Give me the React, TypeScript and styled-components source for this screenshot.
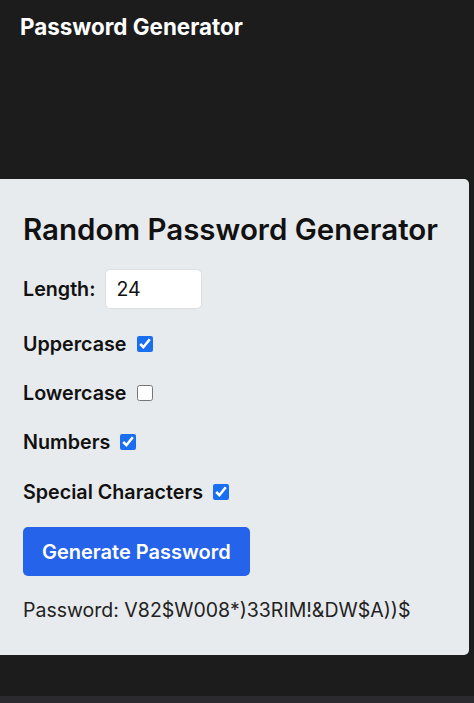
import React, { useState } from 'react';
import styled, { createGlobalStyle } from 'styled-components';

const GlobalStyle = createGlobalStyle`
  html, body {
    margin: 0;
    padding: 0;
    background-color: #1c1c1d;
    font-family: Inter, "Noto Sans", sans-serif;
  }
`;

const CHARS = {
  upper: 'ABCDEFGHIJKLMNOPQRSTUVWXYZ',
  lower: 'abcdefghijklmnopqrstuvwxyz',
  numbers: '0123456789',
  special: '!@#$%^&*()',
};

const App = () => {
  const [length, setLength] = useState('24');
  const [options, setOptions] = useState({
    upper: true,
    lower: false,
    numbers: true,
    special: true,
  });
  const [password, setPassword] = useState('V82$W008*)33RIM!&DW$A))$');

  const toggle = (key: keyof typeof options) =>
    setOptions({ ...options, [key]: !options[key] });

  const generate = () => {
    let pool = '';
    (Object.keys(options) as (keyof typeof options)[]).forEach((k) => {
      if (options[k]) pool += CHARS[k];
    });
    if (!pool) return;
    let out = '';
    for (let i = 0; i < Number(length); i++) {
      out += pool[Math.floor(Math.random() * pool.length)];
    }
    setPassword(out);
  };

  return (
    <Page>
      <GlobalStyle />
      <Header>Password Generator</Header>
      <Card>
        <Title>Random Password Generator</Title>
        <Row $tall>
          <Label htmlFor="length">Length:</Label>
          <LengthInput
            id="length"
            type="number"
            value={length}
            onChange={(e) => setLength(e.target.value)}
          />
        </Row>
        <Row>
          <Label htmlFor="upper">Uppercase</Label>
          <Check id="upper" type="checkbox" checked={options.upper} onChange={() => toggle('upper')} />
        </Row>
        <Row>
          <Label htmlFor="lower">Lowercase</Label>
          <Check id="lower" type="checkbox" checked={options.lower} onChange={() => toggle('lower')} />
        </Row>
        <Row>
          <Label htmlFor="numbers">Numbers</Label>
          <Check id="numbers" type="checkbox" checked={options.numbers} onChange={() => toggle('numbers')} />
        </Row>
        <Row>
          <Label htmlFor="special">Special Characters</Label>
          <Check id="special" type="checkbox" checked={options.special} onChange={() => toggle('special')} />
        </Row>
        <GenerateButton onClick={generate}>Generate Password</GenerateButton>
        <Result>Password: {password}</Result>
      </Card>
      <BottomBar />
    </Page>
  );
};

const Page = styled.div`
  display: flex;
  flex-direction: column;
  min-height: 703px;
  background-color: #1c1c1d;
`;

const Header = styled.h1`
  margin: 0;
  padding: 13px 20px 0;
  height: 179px;
  box-sizing: border-box;
  color: #ffffff;
  font-size: 22.4px;
  font-weight: 700;
  line-height: 28px;
`;

const Card = styled.div`
  display: flex;
  flex-direction: column;
  align-items: flex-start;
  margin-right: 5px;
  padding: 30px 23px 30px;
  height: 476px;
  box-sizing: border-box;
  background-color: #e8ebed;
  border-radius: 0 5px 5px 0;
`;

const Title = styled.h2`
  margin: 0 0 20px;
  color: #111111;
  font-size: 29.5px;
  font-weight: 600;
  line-height: 40px;
`;

const Row = styled.div<{ $tall?: boolean }>`
  display: flex;
  align-items: center;
  gap: 10px;
  height: ${(p) => (p.$tall ? '40px' : '29px')};
  margin-bottom: 20px;
  &:nth-of-type(5) {
    margin-top: 1px;
  }
`;

const Label = styled.label`
  color: #111111;
  font-size: 19.7px;
  font-weight: 600;
  line-height: 24px;
`;

const LengthInput = styled.input`
  width: 97px;
  height: 40px;
  box-sizing: border-box;
  padding: 0 10px;
  border: 1px solid #dcdfe2;
  border-radius: 5px;
  background: #ffffff;
  color: #111111;
  font-family: Inter, sans-serif;
  font-size: 19.5px;
  -moz-appearance: textfield;
  &::-webkit-inner-spin-button,
  &::-webkit-outer-spin-button {
    -webkit-appearance: none;
    margin: 0;
  }
  &:focus {
    outline: none;
  }
`;

const Check = styled.input`
  width: 16px;
  height: 16px;
  margin: 0;
  accent-color: #1a6ff0;
`;

const GenerateButton = styled.button`
  margin-top: 1px;
  padding: 0 19px;
  height: 49px;
  border: none;
  border-radius: 5px;
  background-color: #2563eb;
  color: #ffffff;
  font-family: Inter, sans-serif;
  font-size: 20px;
  font-weight: 600;
  cursor: pointer;
`;

const Result = styled.p`
  margin: 22px 0 0;
  color: #222222;
  font-size: 19.5px;
  font-weight: 400;
  line-height: 24px;
`;

const BottomBar = styled.div`
  margin-top: auto;
  height: 7px;
  background-color: #2b2b2f;
`;

export default App;
